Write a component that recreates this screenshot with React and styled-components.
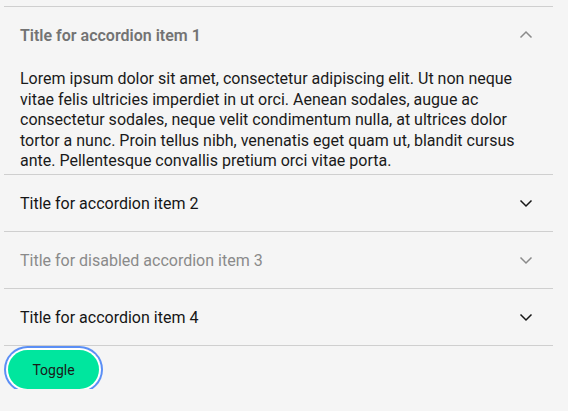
import { useState } from "react"
import styled, { createGlobalStyle } from "styled-components"

const GlobalStyle = createGlobalStyle`
  html, body {
    margin: 0;
    background: #f5f5f5;
    font-family: Roboto, "Liberation Sans", sans-serif;
  }
`

const Page = styled.div`
  padding: 6px 15px 0 4px;
`

const List = styled.div`
  display: flex;
  flex-direction: column;
`

const Item = styled.section`
  border-top: 1px solid #cfcfcf;
  &:last-child {
    border-bottom: 1px solid #cfcfcf;
  }
`

const Header = styled.button`
  display: flex;
  align-items: center;
  justify-content: space-between;
  width: 100%;
  height: 56px;
  padding: 0 20px 0 16px;
  border: none;
  background: transparent;
  font-family: inherit;
  font-size: 16px;
  font-weight: ${({ $open }) => ($open ? 600 : 400)};
  color: ${({ $open, disabled }) => (disabled ? "#8a8a8a" : $open ? "#737373" : "#161616")};
  cursor: ${({ disabled }) => (disabled ? "default" : "pointer")};
  text-align: left;
`

const Chevron = styled.svg`
  width: 14px;
  height: 14px;
  flex-shrink: 0;
  transform: ${({ $open }) => ($open ? "rotate(180deg)" : "none")};
`

const Content = styled.div`
  padding: 6px 36px 2.5px 16px;
  font-size: 16px;
  line-height: 20.5px;
  color: #1a1a1a;
`

const Toggle = styled.button`
  margin: 4px 0 0 4px;
  width: 91px;
  height: 39px;
  border: none;
  border-radius: 20px;
  background: #00e69e;
  color: #1a1a1a;
  font-family: inherit;
  font-size: 14px;
  box-shadow: 0 0 0 2px #ffffff, 0 0 0 4px #5b8ff5;
  cursor: pointer;
`

const lorem =
  "Lorem ipsum dolor sit amet, consectetur adipiscing elit. Ut non neque vitae felis ultricies imperdiet in ut orci. Aenean sodales, augue ac consectetur sodales, neque velit condimentum nulla, at ultrices dolor tortor a nunc. Proin tellus nibh, venenatis eget quam ut, blandit cursus ante. Pellentesque convallis pretium orci vitae porta."

const items = [
  { title: "Title for accordion item 1" },
  { title: "Title for accordion item 2" },
  { title: "Title for disabled accordion item 3", disabled: true },
  { title: "Title for accordion item 4" },
]

function ChevronIcon({ open, color }) {
  return (
    <Chevron $open={open} viewBox="0 0 14 14" fill="none">
      <path d="M1.5 4.5 L7 10 L12.5 4.5" stroke={color} strokeWidth="1.5" />
    </Chevron>
  )
}

export default function App() {
  const [open, setOpen] = useState(0)

  return (
    <Page>
      <GlobalStyle />
      <List>
        {items.map((item, i) => {
          const isOpen = open === i
          const iconColor = item.disabled || isOpen ? "#8a8a8a" : "#161616"
          return (
            <Item key={item.title}>
              <Header
                $open={isOpen}
                disabled={item.disabled}
                onClick={() => setOpen(isOpen ? -1 : i)}
              >
                {item.title}
                <ChevronIcon open={isOpen} color={iconColor} />
              </Header>
              {isOpen && <Content>{lorem}</Content>}
            </Item>
          )
        })}
      </List>
      <Toggle onClick={() => setOpen(open === -1 ? 0 : -1)}>Toggle</Toggle>
    </Page>
  )
}
